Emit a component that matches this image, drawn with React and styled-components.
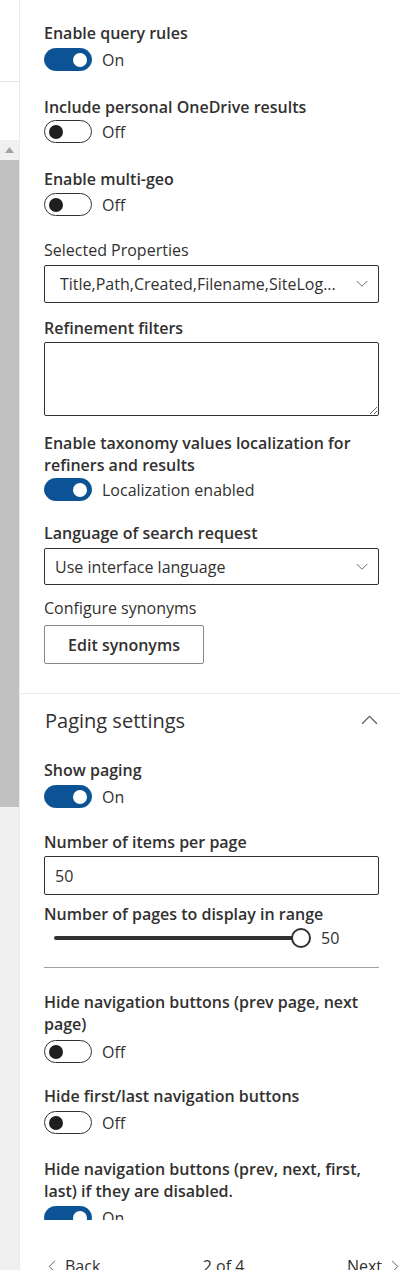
import React from "react";
import styled, { createGlobalStyle } from "styled-components";

const Global = createGlobalStyle`
  html, body { margin: 0; padding: 0; background: #ffffff; }
  body { font-family: "Open Sans", "Noto Sans", sans-serif; color: #323130; }
  * { box-sizing: border-box; }
`;

const Page = styled.div`
  display: flex;
  width: 401px;
  height: 1270px;
  overflow: hidden;
  background: #ffffff;
`;

const Side = styled.div`
  width: 20px;
  flex: none;
  display: flex;
  flex-direction: column;
  border-right: 1px solid #ebebeb;
`;

const SideTop = styled.div`
  height: 82px;
  border-bottom: 1px solid #e3e3e3;
`;

const SideGap = styled.div`
  height: 58px;
`;

const Track = styled.div`
  flex: 1;
  background: #f0f0f0;
  display: flex;
  flex-direction: column;
`;

const ArrowBox = styled.div`
  height: 20px;
  display: flex;
  align-items: center;
  justify-content: center;
`;

const Thumb = styled.div`
  height: 647px;
  background: #c1c1c1;
`;

const Main = styled.div`
  flex: 1;
  display: flex;
  flex-direction: column;
  min-width: 0;
`;

const Scroll = styled.div`
  height: 1220px;
  flex: none;
  overflow: hidden;
`;

const Section = styled.div`
  padding: ${(p) => p.$pt}px 22px ${(p) => p.$pb}px 24px;
  border-bottom: ${(p) => (p.$border ? "1px solid #edebe9" : "none")};
`;

const Field = styled.div`
  margin-top: ${(p) => p.$mt || 0}px;
  display: flex;
  flex-direction: column;
`;

const Label = styled.div`
  padding-top: 2px;
  font-size: 16px;
  line-height: 22px;
  font-weight: ${(p) => (p.$regular ? 400 : 600)};
  color: #323130;
`;

const ToggleRow = styled.div`
  margin-top: ${(p) => p.$mt || 0}px;
  display: flex;
  align-items: center;
  height: 23px;
`;

const Switch = styled.div`
  width: 48px;
  height: 23px;
  border-radius: 12px;
  flex: none;
  display: flex;
  align-items: center;
  padding: 0 4px;
  justify-content: ${(p) => (p.$on ? "flex-end" : "flex-start")};
  background: ${(p) => (p.$on ? "#0b5394" : "#ffffff")};
  border: 1px solid ${(p) => (p.$on ? "#0b5394" : "#323130")};
`;

const Knob = styled.span`
  width: 14px;
  height: 14px;
  border-radius: 50%;
  background: ${(p) => (p.$on ? "#ffffff" : "#201f1e")};
`;

const ToggleText = styled.span`
  margin-left: 10px;
  font-size: 16px;
  line-height: 22px;
  color: #323130;
`;

const Select = styled.div`
  margin-top: ${(p) => p.$mt || 0}px;
  height: ${(p) => p.$h}px;
  border: 1px solid #323130;
  border-radius: 2px;
  display: flex;
  align-items: center;
  padding: 0 10px 0 ${(p) => p.$pl}px;
  font-size: 16px;
  color: #323130;
`;

const SelectText = styled.span`
  flex: 1;
  white-space: nowrap;
  overflow: hidden;
`;

const TextArea = styled.textarea`
  margin-top: ${(p) => p.$mt || 0}px;
  height: 74px;
  width: 100%;
  border: 1px solid #323130;
  border-radius: 2px;
  font-family: inherit;
  font-size: 16px;
  resize: vertical;
  display: block;
`;

const Input = styled.div`
  margin-top: ${(p) => p.$mt || 0}px;
  height: 39px;
  border: 1px solid #323130;
  border-radius: 2px;
  display: flex;
  align-items: center;
  padding-left: 10px;
  font-size: 16px;
`;

const Button = styled.button`
  margin-top: ${(p) => p.$mt || 0}px;
  align-self: flex-start;
  width: 160px;
  height: 39px;
  background: #ffffff;
  border: 1px solid #8a8886;
  border-radius: 2px;
  font-family: inherit;
  font-size: 16px;
  font-weight: 600;
  color: #323130;
`;

const GroupHeader = styled.div`
  display: flex;
  align-items: center;
  justify-content: space-between;
  padding-left: 1px;
  padding-right: 1px;
`;

const GroupTitle = styled.div`
  padding-top: 3px;
  font-size: 20px;
  line-height: 28px;
  color: #323130;
`;

const SliderRow = styled.div`
  margin-top: ${(p) => p.$mt || 0}px;
  height: 22px;
  display: flex;
  align-items: center;
  padding-left: 10px;
`;

const SliderTrack = styled.div`
  position: relative;
  width: 248px;
  height: 4px;
  border-radius: 2px;
  background: #323130;
`;

const SliderThumb = styled.span`
  position: absolute;
  right: -9px;
  top: -8px;
  width: 20px;
  height: 20px;
  border-radius: 50%;
  border: 2px solid #323130;
  background: #ffffff;
`;

const SliderValue = styled.span`
  margin-left: 19px;
  font-size: 16px;
  color: #323130;
`;

const Separator = styled.div`
  margin-top: ${(p) => p.$mt || 0}px;
  height: 1px;
  background: #a19f9d;
`;

const Footer = styled.div`
  flex: none;
  display: flex;
  justify-content: space-between;
  align-items: flex-start;
  padding: 35px 0 0 26px;
  font-size: 16px;
  line-height: 22px;
  color: #323130;
`;

const NavButton = styled.div`
  display: flex;
  align-items: center;
  gap: 6px;
`;

const Chevron = ({ dir = "down", size = 12, color = "#605e5c" }) => {
  const paths = {
    down: "M1 4 L8 11 L15 4",
    up: "M1 12 L8 5 L15 12",
    left: "M11 1 L4 8 L11 15",
    right: "M5 1 L12 8 L5 15",
  };
  return (
    <svg width={size} height={size} viewBox="0 0 16 16" fill="none">
      <path d={paths[dir]} stroke={color} strokeWidth="1.2" />
    </svg>
  );
};

const Toggle = ({ on, text, mt }) => (
  <ToggleRow $mt={mt}>
    <Switch $on={on}>
      <Knob $on={on} />
    </Switch>
    <ToggleText>{text}</ToggleText>
  </ToggleRow>
);

export default function App() {
  return (
    <>
      <Global />
      <Page>
        <Side>
          <SideTop />
          <SideGap />
          <Track>
            <ArrowBox>
              <svg width="9" height="6" viewBox="0 0 9 6">
                <path d="M0 6 L4.5 0 L9 6 Z" fill="#a3a3a3" />
              </svg>
            </ArrowBox>
            <Thumb />
          </Track>
        </Side>
        <Main>
          <Scroll>
            <Section $pt={20} $pb={29} $border>
              <Field>
                <Label>Enable query rules</Label>
                <Toggle on mt={4} text="On" />
              </Field>
              <Field $mt={23}>
                <Label>Include personal OneDrive results</Label>
                <Toggle mt={2} text="Off" />
              </Field>
              <Field $mt={23}>
                <Label>Enable multi-geo</Label>
                <Toggle mt={3} text="Off" />
              </Field>
              <Field $mt={21}>
                <Label $regular>Selected Properties</Label>
                <Select $mt={4} $h={38} $pl={15}>
                  <SelectText>Title,Path,Created,Filename,SiteLog...</SelectText>
                  <Chevron />
                </Select>
              </Field>
              <Field $mt={12}>
                <Label>Refinement filters</Label>
                <TextArea $mt={3} />
              </Field>
              <Field $mt={14}>
                <Label>
                  Enable taxonomy values localization for refiners and results
                </Label>
                <Toggle on mt={2} text="Localization enabled" />
              </Field>
              <Field $mt={19}>
                <Label>Language of search request</Label>
                <Select $mt={4} $h={37} $pl={10}>
                  <SelectText>Use interface language</SelectText>
                  <Chevron />
                </Select>
              </Field>
              <Field $mt={10}>
                <Label $regular>Configure synonyms</Label>
                <Button $mt={6}>Edit synonyms</Button>
              </Field>
            </Section>
            <Section $pt={10} $pb={0}>
              <GroupHeader>
                <GroupTitle>Paging settings</GroupTitle>
                <Chevron dir="up" size={17} />
              </GroupHeader>
              <Field $mt={22}>
                <Label>Show paging</Label>
                <Toggle on mt={4} text="On" />
              </Field>
              <Field $mt={21}>
                <Label>Number of items per page</Label>
                <Input $mt={3}>50</Input>
              </Field>
              <Field $mt={6}>
                <Label>Number of pages to display in range</Label>
                <SliderRow $mt={2}>
                  <SliderTrack>
                    <SliderThumb />
                  </SliderTrack>
                  <SliderValue>50</SliderValue>
                </SliderRow>
              </Field>
              <Separator $mt={18} />
              <Field $mt={21}>
                <Label>Hide navigation buttons (prev page, next page)</Label>
                <Toggle mt={5} text="Off" />
              </Field>
              <Field $mt={20}>
                <Label>Hide first/last navigation buttons</Label>
                <Toggle mt={4} text="Off" />
              </Field>
              <Field $mt={22}>
                <Label>
                  Hide navigation buttons (prev, next, first, last) if they are
                  disabled.
                </Label>
                <Toggle on mt={4} text="On" />
              </Field>
            </Section>
          </Scroll>
          <Footer>
            <NavButton>
              <Chevron dir="left" size={13} />
              <span>Back</span>
            </NavButton>
            <span>2 of 4</span>
            <NavButton>
              <span>Next</span>
              <Chevron dir="right" size={13} />
            </NavButton>
          </Footer>
        </Main>
      </Page>
    </>
  );
}
